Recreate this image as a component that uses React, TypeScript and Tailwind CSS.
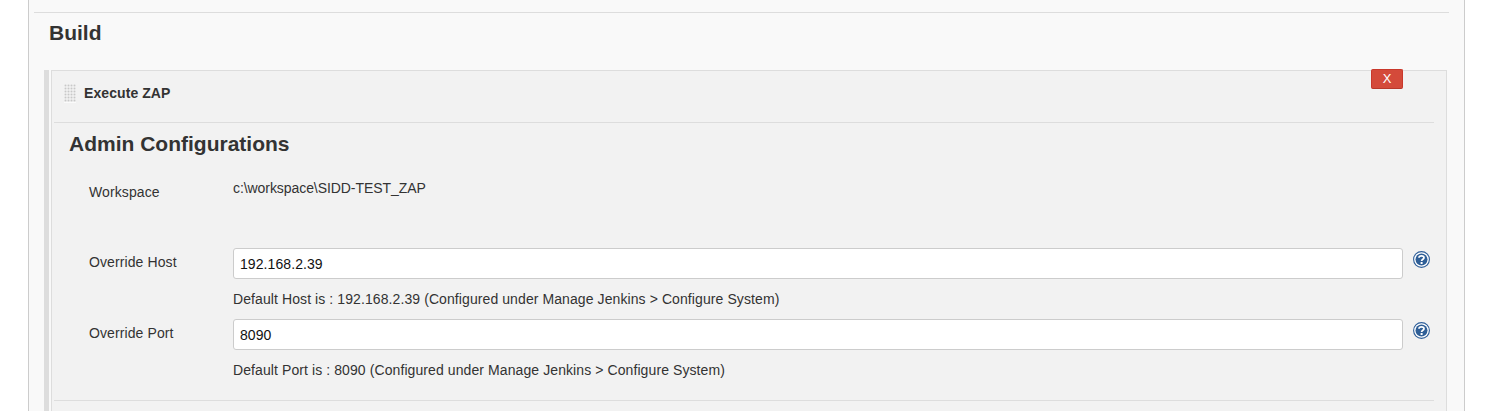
import React from "react";

function Help() {
  return (
    <svg width="17" height="17" viewBox="0 0 17 17" className="shrink-0">
      <circle cx="8.5" cy="8.5" r="7.9" fill="#fff" stroke="#2f5f9a" strokeWidth="1.1" />
      <circle cx="8.5" cy="8.5" r="6" fill="#2f5f97" />
      <path d="M6 6.8 C6 4.2 11 4.2 11 6.8 C11 8.3 8.6 8.3 8.6 10" fill="none" stroke="#fff" strokeWidth="1.7" />
      <rect x="7.6" y="11" width="2" height="2" fill="#fff" />
    </svg>
  );
}

function Row({ label, value, note }: { label: string; value: string; note: string }) {
  return (
    <div className="flex flex-col">
      <div className="flex items-start">
        <div className="w-[164px] shrink-0 pl-[20px] pt-[4px] text-[14px] leading-[20px] tracking-[0.1px] text-[#333]">{label}</div>
        <div className="h-[31px] w-[1170px] shrink-0 rounded-[3px] border border-[#ccc] bg-white px-[6px] text-[14px] leading-[30px] tracking-[0.08px] text-[#111]">{value}</div>
        <div className="ml-[10px] pt-[3px]"><Help /></div>
      </div>
      <div className="ml-[164px] h-[40px] pt-[10px] text-[14px] leading-[20px] tracking-[0.09px] text-[#333]">{note}</div>
    </div>
  );
}

const gripCols = [0, 1, 2, 3];
const gripRows = [0, 1, 2, 3, 4, 5];

function Grip() {
  return (
    <svg width="12" height="19" viewBox="0 0 12 19" className="shrink-0">
      <rect width="12" height="19" fill="#fbfbfb" />
      {gripRows.map((r) =>
        gripCols.map((c) => (
          <rect key={`${r}-${c}`} x={c * 3 + 0.5} y={r * 3 + 0.5} width="2" height="2" fill="#c8c8c8" />
        ))
      )}
    </svg>
  );
}

export default function App() {
  return (
    <div className="h-[411px] w-[1500px] overflow-hidden bg-white font-['Liberation_Sans',Arial,sans-serif]">
      <div className="ml-[28px] h-[411px] w-[1437px] border-x border-x-[#ccc] bg-[#f9f9f9] pl-[5px] pr-[15px] pt-[12px]">
        <div className="border-t border-[#ddd] pl-[15px] pt-[8px]">
          <h2 className="h-[49px] text-[21px] font-bold leading-[24px] text-[#333]">Build</h2>
        </div>
        <div className="ml-[10px] mr-[2px] flex">
          <div className="w-[5px] shrink-0 bg-[#ddd]" />
          <div className="relative ml-[2px] flex h-[400px] flex-1 flex-col border border-[#ddd] bg-[#f2f2f2] pl-[1px]">
            <button className="absolute right-[43px] top-[-2px] h-[20px] w-[32px] rounded-[2px] border border-[#c9382b] border-b-[#b8382a] bg-[#d44a3a] text-[13px] leading-[18px] text-white">X</button>
            <div className="ml-[1px] mr-[12px] flex h-[52px] items-center gap-[8px] border-b border-[#ddd] pb-[7px] pl-[10px]">
              <Grip />
              <span className="text-[14px] font-bold tracking-[0.08px] text-[#333]">Execute ZAP</span>
            </div>
            <div className="pl-[16px] pt-[9px]">
              <h3 className="h-[37px] text-[21px] font-bold leading-[24px] text-[#333]">Admin Configurations</h3>
              <div className="flex h-[79px]">
                <div className="w-[164px] shrink-0 pl-[20px] pt-[13px] text-[14px] leading-[20px] tracking-[0.1px] text-[#333]">Workspace</div>
                <div className="pt-[9px] text-[14px] leading-[20px] tracking-[-0.07px] text-[#333]">c:\workspace\SIDD-TEST_ZAP</div>
              </div>
              <Row label="Override Host" value="192.168.2.39" note="Default Host is : 192.168.2.39 (Configured under Manage Jenkins > Configure System)" />
              <Row label="Override Port" value="8090" note="Default Port is : 8090 (Configured under Manage Jenkins > Configure System)" />
            </div>
            <div className="ml-[1px] mr-[12px] mt-[10px] border-t border-[#ddd]" />
          </div>
        </div>
      </div>
    </div>
  );
}
